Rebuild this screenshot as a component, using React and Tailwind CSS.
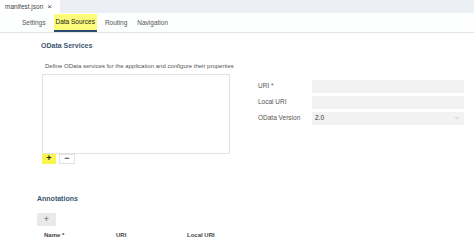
import { ChevronDown } from "lucide-react";

function FormRow({ label, children }) {
  return (
    <div className="flex items-center">
      <span className="w-[54px] text-[6.5px] text-[#555]">{label}</span>
      {children}
    </div>
  );
}

function App() {
  const tabs = ["Settings", "Data Sources", "Routing", "Navigation"];

  return (
    <div className="h-[242px] w-[474px] overflow-hidden bg-white font-['Liberation_Sans',sans-serif] text-[#333]">
      <div className="flex h-[13px] bg-[#eceff3]">
        <div className="flex items-center gap-[4px] bg-white pl-[5px] pr-[8px] text-[6.5px] text-[#444]">
          manifest.json
          <span className="text-[8px] leading-none">×</span>
        </div>
      </div>

      <div className="flex h-[20px] items-end gap-[6px] border-b border-[#e2e4e6] bg-[#fdfefe] pl-[20px]">
        {tabs.map((t) => (
          <div
            key={t}
            className={
              t === "Data Sources"
                ? "flex h-[18px] items-center border-b-2 border-[#2b4c6f] bg-[#fdfb7a] px-[2px] text-[6.5px] text-[#222]"
                : "flex h-[18px] items-center px-[2px] text-[6.5px] text-[#555]"
            }
          >
            {t}
          </div>
        ))}
      </div>

      <div className="pl-[41px] pt-[8px]">
        <h2 className="text-[7px] font-bold text-[#3c5670]">OData Services</h2>
      </div>

      <div className="flex pl-[42px] pt-[10px]">
        <div className="flex w-[188px] flex-col">
          <p className="whitespace-nowrap pl-[3px] text-[6px] text-[#555]">
            Define OData services for the application and configure their properties
          </p>
          <div className="mt-[3px] h-[80px] border border-[#e3e3e3] bg-white" />
          <div className="flex gap-[3px]">
            <button className="flex h-[10px] w-[14px] items-center justify-center bg-[#f7f54e] text-[9px] font-bold leading-none text-[#222]">
              +
            </button>
            <button className="flex h-[10px] w-[16px] items-center justify-center border border-[#e3e3e3] bg-white text-[9px] font-bold leading-none text-[#444]">
              −
            </button>
          </div>
        </div>

        <div className="ml-[28px] mt-[18px] flex flex-col gap-[3px]">
          <FormRow label="URI *">
            <div className="h-[13px] w-[152px] bg-[#f2f2f2]" />
          </FormRow>
          <FormRow label="Local URI">
            <div className="h-[13px] w-[152px] bg-[#f2f2f2]" />
          </FormRow>
          <FormRow label="OData Version">
            <div className="flex h-[13px] w-[152px] items-center justify-between bg-[#f2f2f2] pl-[3px] pr-[4px] text-[6.5px] text-[#333]">
              2.0
              <ChevronDown size={6} color="#999" />
            </div>
          </FormRow>
        </div>
      </div>

      <div className="pl-[37px] pt-[30px]">
        <h2 className="text-[7px] font-bold text-[#3c5670]">Annotations</h2>
        <button className="mt-[9px] flex h-[13px] w-[19px] items-center justify-center bg-[#e9e9e9] text-[9px] leading-none text-[#666]">
          +
        </button>
        <div className="mt-[5px] flex text-[6px] font-bold text-[#444]">
          <span className="w-[79px] pl-[7px]">Name *</span>
          <span className="w-[71px]">URI</span>
          <span>Local URI</span>
        </div>
      </div>
    </div>
  );
}

export default App;
